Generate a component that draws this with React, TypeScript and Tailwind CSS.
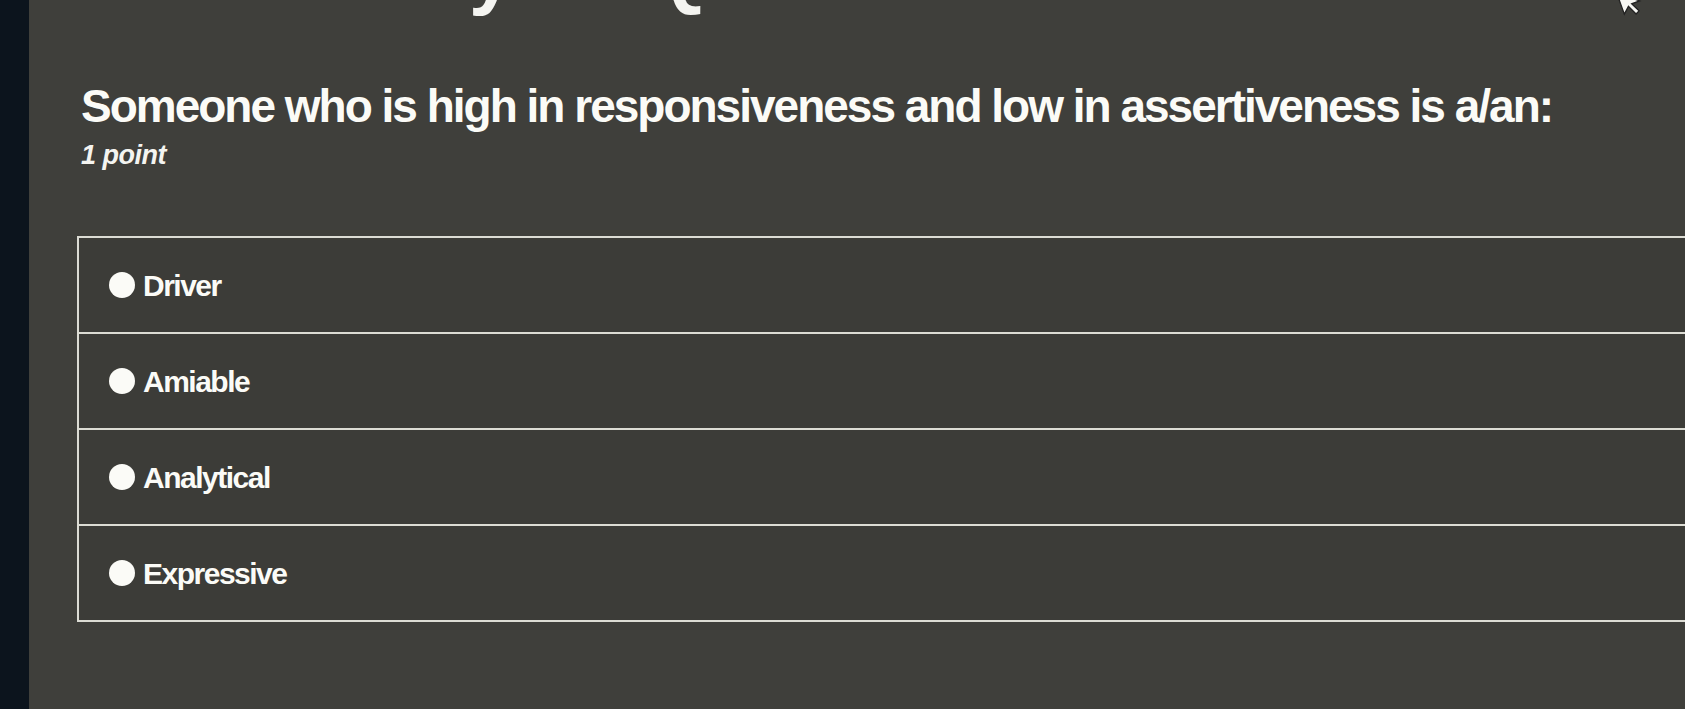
import React from 'react';

const options = ['Driver', 'Amiable', 'Analytical', 'Expressive'];

export default function App() {
  return (
    <div className="relative flex h-[709px] w-[1685px] overflow-hidden bg-[#3f3f3b] font-['Liberation_Sans',Arial,sans-serif] text-white">
      {/* dark bezel on the left */}
      <div className="w-[29px] shrink-0 bg-[#0c141d]" />

      <div className="flex min-w-0 flex-1 flex-col pl-[52px]">
        {/* quiz title, mostly scrolled out of view */}
        <h1 className="-mt-[68px] pl-[50px] text-[80px] font-bold leading-[80px] text-[#f4f4f0]">
          Social Styles Quiz
        </h1>

        <h2 className="mt-[68px] text-[46px] font-bold leading-[52px] tracking-[-2px] text-[#fbfbf7]">
          Someone who is high in responsiveness and low in assertiveness is a/an:
        </h2>
        <p className="mt-[8px] text-[27px] font-bold italic leading-[30px] tracking-[-0.5px] text-[#f4f4f0]">
          1 point
        </p>

        <div className="mt-[66px] -ml-[4px] flex w-[1700px] flex-col border-l-2 border-t-2 border-[#dcdcd4]">
          {options.map((opt) => (
            <label
              key={opt}
              className="flex h-[96px] items-center gap-[8px] border-b-2 border-[#dcdcd4] bg-[#3c3c38] pl-[30px]"
            >
              <span className="h-[26px] w-[26px] shrink-0 rounded-full bg-[#fbfbf7]" />
              <span className="text-[30px] font-bold tracking-[-1.5px] text-[#fbfbf7]">{opt}</span>
            </label>
          ))}
        </div>
      </div>

      {/* mouse pointer peeking in at the top */}
      <svg className="absolute left-[1618px] -top-[14px] h-[32px] w-[26px] -rotate-[20deg]" viewBox="0 0 20 24">
        <path d="M2 1 L2 19 L7 14.5 L10.5 22 L13.5 20.5 L10 13.5 L16.5 13.5 Z" fill="#f6f6f2" stroke="#222" strokeWidth="1" />
      </svg>
    </div>
  );
}
